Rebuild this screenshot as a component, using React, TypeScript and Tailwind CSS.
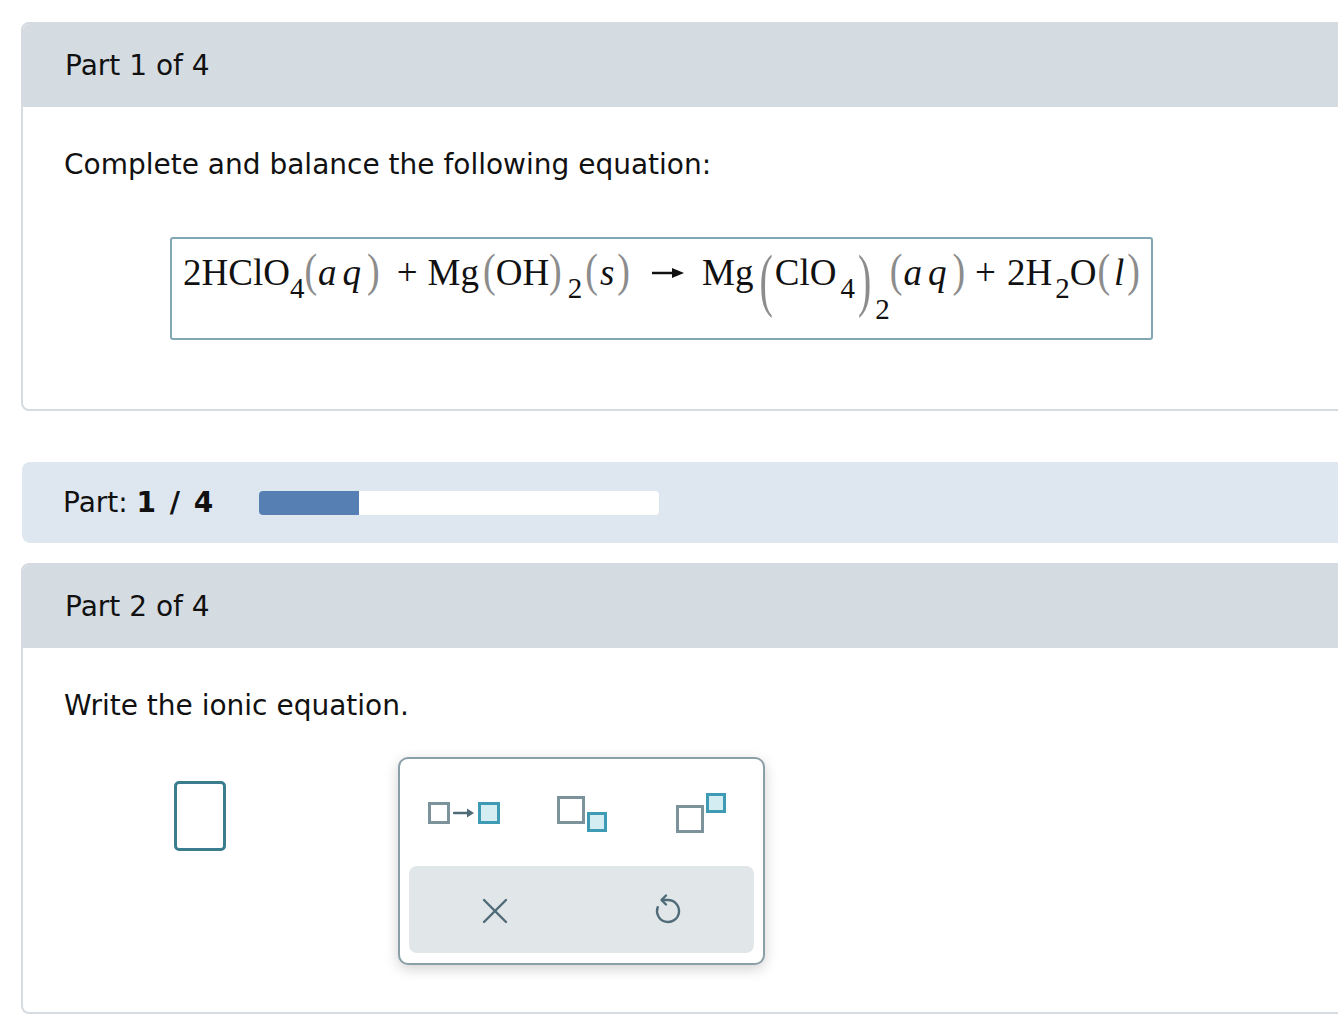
import React from 'react';

const sans = { fontFamily: '"DejaVu Sans", Verdana, sans-serif' };
const serif = { fontFamily: '"Liberation Serif", "Times New Roman", serif' };

function Sub({ children, low = false, className = '' }: { children: React.ReactNode; low?: boolean; className?: string }) {
  return (
    <span className={`relative text-[29px] ${low ? 'top-[34px]' : 'top-[13px]'} ${className}`}>{children}</span>
  );
}

function Paren({ ch, big = false, className = '' }: { ch: string; big?: boolean; className?: string }) {
  return (
    <span
      className={`inline-block text-[#8c8c8c] font-light ${
        big ? 'scale-y-[1.75] text-[40px] relative top-[8px]' : 'scale-y-[1.2] text-[38px] relative -top-[2px]'
      } ${className}`}
    >
      {ch}
    </span>
  );
}

function Equation() {
  return (
    <div
      className="ml-[106px] mt-[55px] w-[983px] h-[103px] border-2 border-[#80a7b3] rounded-[3px] pl-[11px] pt-[3px] text-[37px] text-[#111] whitespace-nowrap"
      style={serif}
    >
      <span>2HClO</span>
      <Sub>4</Sub>
      <Paren ch="(" />
      <span className="italic tracking-[6px] ml-[1px]">aq</span>
      <Paren ch=")" />
      <span className="ml-[17px]">+</span>
      <span className="ml-[10px]">Mg</span>
      <Paren ch="(" className="ml-[4px]" />
      <span>OH</span>
      <Paren ch=")" />
      <Sub className="ml-[6px]">2</Sub>
      <Paren ch="(" className="ml-[3px]" />
      <span className="italic ml-[2px] mr-[3px]">s</span>
      <Paren ch=")" />
      <span className="inline-block ml-[22px] mr-[18px] relative -top-[6px]">
        <svg width="32" height="12" viewBox="0 0 32 12">
          <line x1="0" y1="6" x2="24" y2="6" stroke="#111" strokeWidth="2.5" />
          <path d="M20 1 L32 6 L20 11 Z" fill="#111" />
        </svg>
      </span>
      <span>Mg</span>
      <Paren ch="(" big className="ml-[6px]" />
      <span className="ml-[2px]">ClO</span>
      <Sub className="ml-[4px]">4</Sub>
      <Paren ch=")" big className="ml-[3px]" />
      <Sub low className="ml-[4px]">2</Sub>
      <Paren ch="(" />
      <span className="italic tracking-[6px] ml-[1px]">aq</span>
      <Paren ch=")" />
      <span className="ml-[10px]">+</span>
      <span className="ml-[11px]">2H</span>
      <Sub className="ml-[3px]">2</Sub>
      <span>O</span>
      <Paren ch="(" className="ml-[1px]" />
      <span className="italic ml-[4px] mr-[3px]">l</span>
      <Paren ch=")" />
    </div>
  );
}

function CardHeader({ title }: { title: string }) {
  return (
    <div className="h-[83px] bg-[#d5dce1] flex items-center pl-[42px] text-[28px] text-[#111]">
      {title}
    </div>
  );
}

function XIcon() {
  return (
    <svg width="28" height="28" viewBox="0 0 28 28" fill="none" stroke="#4f6b78" strokeWidth="2.4" strokeLinecap="round">
      <line x1="3" y1="3" x2="25" y2="25" />
      <line x1="25" y1="3" x2="3" y2="25" />
    </svg>
  );
}

function UndoIcon() {
  return (
    <svg width="30" height="30" viewBox="0 0 30 30" fill="none" stroke="#4f6b78" strokeWidth="2.4" strokeLinecap="round" strokeLinejoin="round" className="overflow-visible">
      <path d="M9 4 H15 A11 11 0 1 1 4.7 11.2" />
      <path d="M13 -0.5 L8.5 4 L13 8.5" />
    </svg>
  );
}

function ToolPanel() {
  return (
    <div className="w-[367px] h-[208px] border-2 border-[#8a9fa8] rounded-[10px] bg-white shadow-[0_4px_14px_rgba(0,0,0,0.18)] flex flex-col px-[9px] pb-[10px]">
      <div className="h-[107px] grid grid-cols-3 items-center">
        {/* arrow */}
        <div className="flex items-center justify-center gap-[3px] pr-[6px]">
          <div className="w-[22px] h-[22px] border-[3px] border-[#7d939c]" />
          <svg width="22" height="10" viewBox="0 0 22 10">
            <line x1="1" y1="5" x2="16" y2="5" stroke="#4f6b78" strokeWidth="2.5" strokeLinecap="round" />
            <path d="M14 0.5 L21 5 L14 9.5 Z" fill="#4f6b78" />
          </svg>
          <div className="w-[22px] h-[22px] border-[3px] border-[#3f9ab3] bg-[#d3edf2]" />
        </div>
        {/* subscript */}
        <div className="flex justify-center">
          <div className="flex items-start gap-[2px] pt-[2px]">
            <div className="w-[28px] h-[28px] border-[3px] border-[#7d939c]" />
            <div className="mt-[16px] w-[20px] h-[20px] border-[3px] border-[#3f9ab3] bg-[#d3edf2]" />
          </div>
        </div>
        {/* superscript */}
        <div className="flex justify-center">
          <div className="flex items-start gap-[2px] pl-[8px]">
            <div className="mt-[12px] w-[28px] h-[28px] border-[3px] border-[#7d939c]" />
            <div className="w-[20px] h-[20px] border-[3px] border-[#3f9ab3] bg-[#d3edf2]" />
          </div>
        </div>
      </div>
      <div className="flex-1 bg-[#e1e6e9] rounded-[8px] grid grid-cols-2 items-center">
        <div className="flex justify-center pt-[2px]">
          <XIcon />
        </div>
        <div className="flex justify-center pt-[2px]">
          <UndoIcon />
        </div>
      </div>
    </div>
  );
}

export default function App() {
  return (
    <div className="w-[1338px] h-[1016px] overflow-hidden bg-white pl-[22px] pt-[22px]" style={sans}>
      {/* Part 1 */}
      <div className="w-[1340px] h-[389px] border-2 border-[#d5dbe0] rounded-[8px] overflow-hidden -ml-[1px]">
        <CardHeader title="Part 1 of 4" />
        <div className="pt-[41px] pl-[41px]">
          <div className="text-[28px] leading-[34px] text-[#111]">Complete and balance the following equation:</div>
          <Equation />
        </div>
      </div>

      {/* Progress */}
      <div className="mt-[51px] w-[1340px] h-[81px] bg-[#dee7ef] rounded-[8px] flex items-center pl-[41px]">
        <div className="text-[28px] text-[#111]">
          Part: <span className="font-bold tracking-[2px]">1 / 4</span>
        </div>
        <div className="ml-[44px] w-[400px] h-[24px] bg-white rounded-[4px] overflow-hidden flex">
          <div className="w-[100px] h-full bg-[#5680b3]" />
        </div>
      </div>

      {/* Part 2 */}
      <div className="mt-[20px] w-[1340px] h-[451px] border-2 border-[#d5dbe0] rounded-[8px] overflow-hidden -ml-[1px]">
        <CardHeader title="Part 2 of 4" />
        <div className="pt-[41px] pl-[41px]">
          <div className="text-[28px] leading-[34px] text-[#111]">Write the ionic equation.</div>
          <div className="mt-[34px] flex items-start">
            <div className="ml-[110px] mt-[24px] w-[52px] h-[70px] border-[3px] border-[#3b7d8f] rounded-[5px]" />
            <div className="ml-[172px]">
              <ToolPanel />
            </div>
          </div>
        </div>
      </div>
    </div>
  );
}
